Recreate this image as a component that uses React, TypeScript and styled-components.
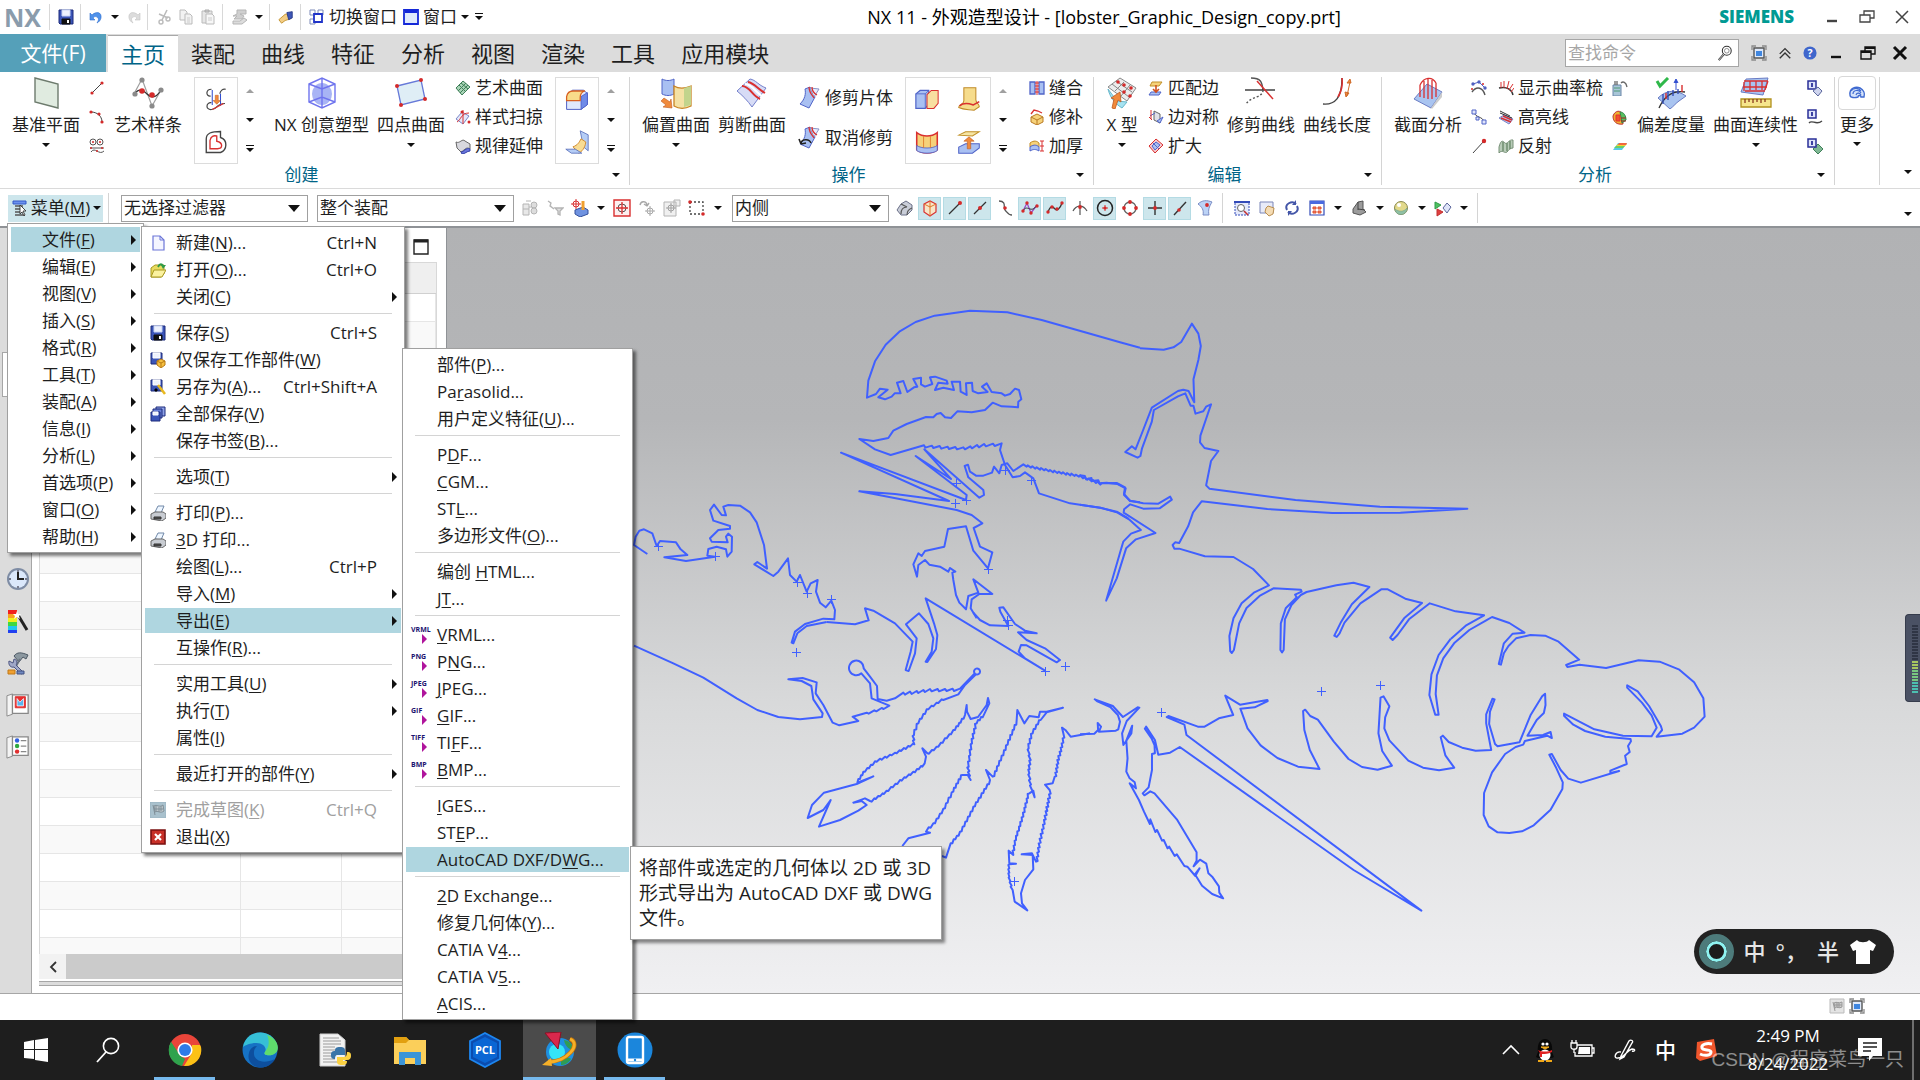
import React from "react";
import styled, { createGlobalStyle, css } from "styled-components";

const Global = createGlobalStyle`
  * { box-sizing: border-box; }
  html, body { margin: 0; padding: 0; }
  body { overflow: hidden; }
  button, input, select {
    font: inherit; color: inherit; border: 0; padding: 0; margin: 0; background: none; border-radius: 0;
  }
  svg { display: block; flex: none; }
`;

/* ---------- icons ---------- */

const P = (d: string, stroke = "#333", fill = "none", w = 1) => (
  <path key={d + stroke} d={d} stroke={stroke} fill={fill} strokeWidth={w} />
);
const D = (pts: number[][], r = 1.6, c = "#d42a2a") =>
  pts.map(([x, y]) => <circle key={`${x}-${y}`} cx={x} cy={y} r={r} fill={c} />);

const B = "#5064c8";
const LB = "#a9c0f2";
const Y = "#f6d27a";
const R = "#d93030";

const ICONS: Record<string, [number, React.ReactNode]> = {
  save: [16, <>{P("M1 1h14v14H2l-1-1z", "#1c2b7a", "#3b55b8")}{P("M4 1h8v6H4z", "#c8d4f4", "#eef2fd")}{P("M4 10h8v5H4z", "#111", "#111")}{P("M9 11h2v3H9z", "#fff", "#fff", 0)}</>],
  undo: [16, <>{P("M3 6c4-4 10-3 9 3-.3 2-2 4-4 5 2-3 2-5 0-6-2-1-3 0-4 1l2 2H1V4z", "#2f6fd0", "#4f92ea", 0.6)}</>],
  redo: [16, <>{P("M13 6C9 2 3 3 4 9c.3 2 2 4 4 5-2-3-2-5 0-6 2-1 3 0 4 1l-2 2h5V4z", "#c4c4c4", "#dcdcdc", 0.6)}</>],
  cut: [16, <>{P("M11 1 6 11M3 5l9 4", "#bbb", "none", 1.6)}<circle cx="5" cy="13" r="2" fill="none" stroke="#bbb" strokeWidth="1.4" /><circle cx="12" cy="10" r="2" fill="none" stroke="#bbb" strokeWidth="1.4" /></>],
  copy: [16, <>{P("M2 1h5l2 2v8H2z", "#bbb", "#f2f2f2")}{P("M7 5h5l2 2v8H7z", "#bbb", "#f2f2f2")}{P("M9 9h3M9 11h3M9 13h3", "#ccc")}</>],
  paste: [16, <>{P("M2 2h10v12H2z", "#bbb", "#e6e6e6")}{P("M5 1h4v2H5z", "#aaa", "#ccc")}{P("M6 5h6l2 2v8H6z", "#bbb", "#f7f7f7")}{P("M8 9h4M8 11h4", "#ccc")}</>],
  gear: [18, <>{P("M6 2h9v4H9l4 2-2 3H3l3-3H2l4-2z", "#b5b5b5", "#cfcfcf")}{P("M2 13h7l4-3 3 2-5 4H2z", "#b5b5b5", "#dcdcdc")}</>],
  touch: [18, <>{P("M1 12 8 6l6-1v6l-6 2-4 3z", "#c2902c", "#f3cd84")}{P("M10 4l6-1v7l-4 2z", "#273a86", "#3f57b8")}</>],
  switchw: [16, <>{P("M1 1h5v5H1zM9 1h5v5H9zM1 10h5v5H1z", "#7d8bb8", "#fff")}{P("M5 5h8v8H5z", "#2034c8", "#fff", 1.8)}</>],
  window: [16, <>{P("M1 1h14v14H1z", "#1428d8", "#dfeafc", 1.8)}{P("M2 2h12v2H2z", "#1428d8", "#1428d8", 0)}</>],
  plane: [32, <>{P("M5 1 28 7v24L5 25z", "#6d7b6d", "#e0ebe0", 1.4)}</>],
  line: [16, <>{P("M3 13 13 3", "#444")}{D([[3, 13], [13, 3]])}</>],
  arc: [16, <>{P("M2 3c6 0 11 4 11 10", "#444")}{D([[2, 3], [10, 5], [13, 13]])}</>],
  curves: [16, <><circle cx="4" cy="4" r="3" fill="none" stroke="#555" /><circle cx="11" cy="4" r="3" fill="none" stroke="#555" />{P("M1 10h14M2 14c4-6 8 4 13-1", "#555")}{D([[2, 10], [8, 13], [13, 10], [4, 4], [11, 4]], 1)}</>],
  spline: [32, <>{P("M3 15 10 2l10 27 9-16", "#a0a0a0", "none", 1.2)}{P("M3 16c6-6 9-2 12 1s8 6 14-4", "#333", "none", 1.3)}{D([[3, 17], [10, 3], [20, 29], [29, 13]], 2.6, "#8a8a8a")}{D([[10, 14], [20, 18]], 2.8)}</>],
  project: [32, <>{P("M10 3C2 3 2 13 9 12M29 3c-6-1-7 3-8 6M10 21c-8-1-8 10 0 9M10 30c9 0 5-8 18-8", "#444", "none", 1.6)}{P("M11 4v20M22 9v16", "#334fd0", "none", 1.4)}{P("M15 11h4v7h3l-5 5-5-5h3z", "#c05a20", "#f08a3c", 0.7)}{P("M11 30 26 22", R, "none", 1.8)}</>],
  offsetc: [32, <>{P("M3 30V12C3 4 10 2 22 2v8c10 3 9 17 0 20z", "#444", "#fff", 1.8)}{P("M8 25V14c1-6 5-7 9-6v7c9 2 8 10 1 10z", R, "none", 1.8)}</>],
  nxrealize: [32, <><ellipse cx="16" cy="17" rx="10" ry="11" fill="#a8b4f5" />{P("M3 7 16 1l13 6v18l-13 6-13-6zM3 7l13 5 13-5M16 12v19M3 25l13-5 13 5M16 1v19", "#6f74ee", "none", 1.4)}</>],
  fourpt: [32, <>{P("M2 9 26 3l4 19-24 6z", "#6679d8", "#dfeef6", 1.3)}{D([[2, 9], [26, 3], [30, 22], [6, 28]], 2)}</>],
  studio: [16, <>{P("M1 8 8 1l7 6-8 8z", "#3f7f58", "#a8d3b6")}{P("M4 5l7 7M6 3l7 6M3 11l8-8M5 13l8-8", "#3f7f58")}</>],
  sweep: [16, <>{P("M1 10 7 3l7 4-6 8z", "#7a87c8", "#e4e8fa")}{P("M2 13c4-2 4-9 12-9M8 1v14", R)}{D([[7, 3], [14, 13]], 1.5)}</>],
  law: [16, <>{P("M1 4c4 2 6-4 9-1l5 3v5c-4-3-6 2-9 3L2 10z", "#666", "#d8d8de")}{P("M6 14c3 0 5-5 9-3v2c-3 0-5 3-8 3z", "#3340a8", "#6a76dc")}</>],
  blendface: [30, <>{P("M2 12 9 4h14l5 4v14l-8 6H2z", "#4a5cc4", "#dfe8fc", 1.2)}{P("M20 12l8-5v15l-8 6z", "#4a5cc4", "#6f8be8")}{P("M2 17v-5c1-5 4-7 8-7h15c-4 1-6 3-6 8v4z", "#d86020", "#f8dc8a", 1.6)}</>],
  flange: [30, <>{P("M19 1l10 5v20l-6-5z", "#5068b8", "#b5cdf6")}{P("M10 21c6-2 8-6 10-10l6 4c-1 8-5 12-9 14z", "#d08a30", "#f8dc94", 1.2)}{P("M1 24h12l8 5H8z", "#5068b8", "#b5cdf6")}</>],
  offsurf: [32, <>{P("M2 2c4 2 8 2 12 0v15c-4 2-8 2-12 0z", B, LB)}{P("M14 9c5 3 10 3 17 0v20c-6 3-12 3-17 0z", "#c98424", "#f4e1a4", 1.3)}{P("M24 11v19l7-2V9z", "#b4c070", "#c2d48c", 0)}{P("M4 21l6 4 1-3 1 9-9-1 3-2-5-4z", "#c05a20", "#f08a3c", 0.6)}</>],
  divide: [32, <>{P("M1 14 14 2c6 1 8 6 16 9L16 30C12 24 6 18 1 14z", "#7480cc", "#d7dcf6")}{P("M6 9c8 0 10 10 18 13M12 5c6 1 10 7 17 11", R, "none", 2)}{P("M9 7c7 0 10 8 17 12", "#fff", "none", 2)}</>],
  trim: [24, <>{P("M8 3l5-2 5 10-6 11-9-4C8 13 9 8 8 3z", B, LB)}{P("M13 2l9 1-5 8z", "#8a93c8", "#e9ecfb")}{P("M12 1c0 6 4 9 5 11M15 1c0 4 3 7 5 8", R, "none", 1.3)}</>],
  untrim: [24, <>{P("M8 3l5-2 5 10-6 11-9-4C8 13 9 8 8 3z", B, LB)}{P("M13 2l9 1-5 8z", "#8a93c8", "#e9ecfb")}{P("M12 1c0 6 4 9 5 11M15 1c0 4 3 7 5 8", R, "none", 1.3)}{P("M4 18c0-5 8-6 10-1M4 18l-2-5M4 18l5-1", "#222", "none", 1.6)}</>],
  cubeoff: [28, <>{P("M1 8l5-4h10v16l-4 5H1z", B, LB, 1.4)}{P("M1 8h11v17M12 8l4-4", B)}{P("M14 9l5-5h8v15l-5 6h-8z", R, "#f8dfa0", 1.2)}</>],
  pipe: [28, <>{P("M8 1h14v14c0 4 4 4 4 8l-6 4c-8-1-12 0-18-3 0-5 6-3 6-8z", "#c08a28", "#f6dc8c", 1.2)}{P("M3 22c6-5 13-2 16-1l7-4", R, "none", 1.8)}</>],
  extend: [28, <>{P("M2 3c4 3 6 4 12 4s8-1 12-4v20c-5 5-19 5-24 0z", R, Y, 1.8)}{P("M2 18c5 4 19 4 24 0v6c-5 4-19 4-24 0z", B, LB)}{P("M10 7v14M18 7v14", "#e07828")}</>],
  pull: [28, <>{P("M2 6 10 2h16l-8 5z", "#c09028", "#f6e5a4", 1.2)}{P("M2 20l8-4h16v5l-8 6H2z", B, LB, 1.2)}{P("M12 22V13H8l6-5 6 5h-4v9z", "#c05a20", "#f08a3c", 0.7)}</>],
  sew: [16, <>{P("M1 2h5v12H1zM10 2h5v12h-5z", B, LB, 1.3)}{P("M8 1v14M6 3h4M6 6h4M6 9h4M6 12h4", R)}</>],
  patch: [16, <>{P("M2 8l6-3 6 3v5l-6 3-6-3z", "#b87a24", Y)}{P("M2 8l6 3 6-3M8 11v5", "#b87a24")}{P("M2 5l3-4 4 1 4 2", R, "none", 1.3)}</>],
  thicken: [16, <>{P("M1 5c4-3 7-2 9 0v4c-3-2-6-2-9 0z", "#c08a24", Y)}{P("M1 9c4-3 7-2 9 0v4c-3-2-6-2-9 0z", B, LB)}{P("M13 3v10M11 3h4M11 13h4M11 8h4", R)}</>],
  xform: [32, <>{P("M2 10 14 1l16 10-9 13z", "#888", "#ececec")}{P("M6 7l17 13M10 4l16 11M9 14l9-9M15 19l9-11", "#888")}{P("M2 12l9 12 10 1-5 6C8 26 4 20 2 12z", "#68b8cc", "#a6e2f0")}{P("M6 31l2-9-3-1 9-6 1 10-3-2-3 9z", "#c05a20", "#f08a3c", 0.8)}{D([[12, 5], [18, 8], [25, 11], [18, 15], [24, 19]], 1.8)}</>],
  matchedge: [16, <>{P("M4 2h10l-3 4H2z", "#c09028", Y)}{P("M3 12h10l-2 3H1z", B, LB)}{P("M8 5v7M5 9l3 3 3-3", "#d05020", "none", 1.6)}</>],
  symm: [16, <>{P("M6 2l6 3v9l-6-3z", "#666", "#e0e0e8")}{P("M2 7l5-3M9 12l6-4-3 6z", B, LB)}{P("M3 1v9M1 8l3 3", R)}</>],
  enlarge: [16, <>{P("M1 8 8 1l7 6-8 8z", R, "#f4c9d0")}{P("M4 8l4-4 4 3-5 5z", B, LB)}{P("M5 5l6 6", B)}</>],
  trimcurve: [32, <>{P("M6 1c10 0 11 4 12 12", "#555", "none", 1.4)}{P("M0 13h30", "#333", "none", 1.4)}<path d="M18 13c0 8-12 6-17 14" fill="none" stroke="#555" strokeWidth="1.4" strokeDasharray="2 2" />{P("M12 4l16 18", R, "none", 1.5)}</>],
  curvelen: [32, <>{P("M2 27c12 1 19-6 19-26", "#444", "none", 1.4)}{P("M21 1c1 8-1 14-4 19", R, "none", 1.6)}{P("M29 5l-3 14M29 2l-3 4h4zM25 20l-1-5 4 1z", "#d06a28", "#f08a3c", 1)}</>],
  section: [32, <>{P("M2 22 15 7l15 8-11 16z", "#6a7cc4", "#a9c4f0")}{P("M19 31l11-16v5L20 32z", "#999", "#ccc", 0)}{P("M8 20V8M12 21V4M16 22V2M20 22V3M24 20V6M8 8c4-8 12-9 16-2", R, "none", 1.3)}</>],
  ana1: [16, <>{P("M1 12c5-7 11-4 13 3", "#555", "none", 1.4)}{P("M2 4l6-2 6 6", B)}{D([[2, 4], [8, 2], [14, 8]], 1.7, "#5060c0")}{D([[1, 9], [12, 4]], 1)}</>],
  ana2: [16, <>{P("M3 3c1 6 9 4 10 10", "#444")}{P("M1 1h4v4H1zM11 11h4v4h-4zM5 8h3v3H5z", B, "#dfe4fa")}</>],
  ana3: [16, <>{P("M2 15 13 3", "#444")}{D([[13, 3]], 2.2)}</>],
  comb: [16, <>{P("M1 8c8-2 13 2 14 7", "#333", "none", 1.4)}{P("M3 8V2M6 8V1M9 9l2-8M11 10l4-6M13 12l3-4", R)}</>],
  highlight: [16, <>{P("M1 9l5-3 9 4-4 5z", "#7a87c8", "#b8c6f2")}{P("M2 2l10 5M2 4l12 5", "#333")}{P("M3 9l10 4M5 7l9 4", R, "none", 1.4)}</>],
  reflect: [16, <>{P("M1 9c2-8 4-6 6-4s4-4 8-3v8c-3 0-4 2-6 4s-5-3-8 1z", "#779077", "#b9ccb9")}{P("M5 4v9M9 5v8M12 3v8", "#6c8a6c", "none", 1.4)}</>],
  cup: [16, <>{P("M1 5h8v11H1z", "#6a86a8", "#a9c6d8")}{P("M3 5V1M5 5V1M9 3c2-2 5-1 6 4", "#666", "none", 1.3)}{P("M2 8h6M2 11h6", "#4f9a74")}</>],
  heat: [16, <>{P("M1 7c2-6 8-6 9-2l1 10C5 16 1 13 1 7z", "#c03030", "#f0b030")}{P("M8 3c4 0 6 4 6 8l-4 3z", "#308850", "#58c060")}{P("M4 6h4v6H4z", "#e03030", "#f05030")}{P("M9 9h5M9 12h5", "#a02020")}</>],
  rainbow: [16, <>{P("M1 12 6 5h9l-5 7z", "none", "#58c8e8", 0)}{P("M2 10h9l2-2H4z", "none", "#68d068", 0)}{P("M4 8h9l2-2H6z", "none", "#f8d030", 0)}{P("M7 5h8l-1 2H6z", "none", "#f06840", 0)}</>],
  deviate: [32, <>{P("M3 21c8-8 18-9 28-2l-7 5c-3 2-5 5-9 8z", "#6a7cc4", "#a9c4f0")}{P("M4 31C9 20 17 13 30 15", "#333", "none", 1.3)}{P("M8 17v10M13 14v9M18 13v6M23 12v5", "#334fb8", "none", 1.4)}{P("M27 8v7M11 22v-6", R, "none", 1.4)}{P("M21 13V3M19 6l2-4 2 4", "#334fd0", "#334fd0", 1)}{P("M2 4l3 5L13 1l-1 1", "#2fb84a", "none", 3)}</>],
  continuity: [32, <>{P("M6 2 28 1l-5 17L1 15z", "#6a7cc4", "#a9c4f0")}{P("M4 4h24M3 10h24M4 5v9M10 4v9M16 4v9M22 4v9M28 4l-3 9M5 14h20", R, "none", 1.3)}{P("M1 22h30v8H1z", "#b0901c", "#f6e58c", 1.3)}{P("M5 22v4M9 22v3M13 22v4M17 22v3M21 22v4M25 22v3", "#8a3a20", "none", 1.3)}</>],
  info1: [16, <>{P("M1 1h8v8H1z", "#2a2f98", "#dfe4fa", 1.5)}{P("M5 3v4", "#2a2f98", "none", 1.8)}{P("M6 11l5-4 4 4-4 5z", "#5c679c", "#cfd5ee")}</>],
  info2: [16, <>{P("M1 1h8v8H1z", "#2a2f98", "#dfe4fa", 1.5)}{P("M5 3v4", "#2a2f98", "none", 1.8)}{P("M2 14c3-4 7 3 13-2", "#444", "none", 1.3)}</>],
  info3: [16, <>{P("M6 11l5-5 5 5-5 5z", "#3f7f58", "#7fb894")}{P("M1 1h8v8H1z", "#2a2f98", "#dfe4fa", 1.5)}{P("M5 3v4", "#2a2f98", "none", 1.8)}</>],
  brain: [18, <>{P("M2 11C1 4 8 2 12 4s5 6 4 9h-3c0-2-3-2-3 0-3 1-8 1-8-2z", "#3f6ad0", "#d4e2fa", 1.4)}{P("M5 10c0-4 6-5 8-1M8 11c1-3 4-2 5 0M3 7c3-4 8-3 10 0", "#3f6ad0", "none", 1.2)}</>],
  menu: [16, <>{P("M1 1h13v3H1z", "#3358c8", "#6c92ee")}{P("M3 6h8M3 9h6M3 12h7M3 15h9", "#555", "none", 1.3)}{P("M8 5v9l2-2 2 4 1-1-2-4h3z", "#333", "#fff", 0.9)}</>],
  t_asm: [18, <>{P("M2 5h6v11H2zM5 2h5M2 10h6M8 8h3", "#b4b4b4", "#e8e8e8")}<circle cx="13" cy="6" r="3" fill="#ddd" stroke="#b4b4b4" /><circle cx="13" cy="12" r="3" fill="#ddd" stroke="#b4b4b4" /></>],
  t_filter: [18, <>{P("M2 2l3 2-1 3 4 3M9 9h8l-3 3v4l-2-1v-3z", "#b4b4b4", "#e0e0e0", 1.3)}</>],
  t_snap: [18, <>{P("M4 11l8-3 5 3v4l-8 3-5-3z", "#34509c", "#6f92e0")}<circle cx="5" cy="5" r="3" fill="none" stroke={R} />{P("M5 0v10M0 5h10", R)}{P("M12 2v9", "#f0a030", "none", 3)}</>],
  t_target: [18, <>{P("M1 1h16v16H1z", R, "#fdf0f0", 1.4)}<circle cx="9" cy="9" r="4" fill="none" stroke="#555" />{P("M9 3v12M3 9h12", R, "none", 1.3)}</>],
  t_rot: [18, <>{P("M2 6c1-5 7-4 7 1M9 7l-3-2M9 7l2-3", "#a8a8a8", "none", 1.4)}<circle cx="12" cy="12" r="3" fill="none" stroke="#a8a8a8" />{P("M12 7v10M7 12h10", "#a8a8a8")}</>],
  t_tgray: [18, <>{P("M1 3h12v14H1zM11 1h6v6h-6z", "#b4b4b4", "#f0f0f0")}<circle cx="8" cy="9" r="3" fill="none" stroke="#a0a0a0" />{P("M8 4v10M3 9h10", "#a0a0a0")}</>],
  t_rect: [18, <><rect x="2" y="3" width="13" height="12" fill="none" stroke="#444" strokeWidth="1.3" strokeDasharray="2 2" />{D([[2, 3], [15, 15]], 1.8)}</>],
  t_face: [18, <>{P("M1 11 5 5l5-3 6 4v5l-5 5H5z", "#6b7088", "#c9cdd8")}{P("M5 15c0-5 2-7 6-7M11 16c0-4 2-6 5-7M5 5l6 3", "#555", "none", 1.2)}</>],
  t_cube: [18, <>{P("M3 5l6-3 6 3v8l-6 4-6-4z", R, "#f8e6c8", 1.2)}{P("M3 5l6 3 6-3M9 8v9M9 2v6", "#e07828")}</>],
  t_line1: [18, <>{P("M3 15 14 4", "#333", "none", 1.3)}{D([[14, 4]], 2)}</>],
  t_line2: [18, <>{P("M3 15 15 3", "#333", "none", 1.3)}{D([[9, 9]], 2)}</>],
  t_scurve: [18, <>{P("M3 2c8 0 4 7 6 9s3 5 7 5", "#555", "none", 1.3)}{D([[9, 9]], 1.8)}</>],
  t_zig: [18, <>{P("M2 12 6 4l4 10 6-8", "#9a4cc8", "none", 1.3)}{P("M2 12c4-8 8 4 14-6", "#333")}{D([[2, 12], [6, 4], [10, 14], [16, 7]], 1.7)}</>],
  t_wave: [18, <>{P("M2 13c3-8 5-5 7-3s5 0 7-6", "#333", "none", 1.3)}{D([[2, 13], [6, 8], [11, 10], [16, 4]], 1.7)}</>],
  t_cross: [18, <>{P("M9 2v14M2 12c3-6 10-7 14 0", "#555", "none", 1.2)}{D([[9, 8]], 1.9)}</>],
  t_circle: [18, <><circle cx="9" cy="9" r="7.500" fill="none" stroke="#222" strokeWidth="1.5" />{P("M9 6v6M6 9h6", R)}{D([[9, 9]], 1.6)}</>],
  t_quad: [18, <><circle cx="9" cy="9" r="6" fill="none" stroke="#666" strokeWidth="1.3" />{D([[9, 3], [15, 9], [9, 15], [3, 9]], 1.9)}</>],
  t_plus: [18, <>{P("M9 2v14M2 9h14", "#333", "none", 1.4)}{D([[9, 9]], 1.9)}</>],
  t_slash: [18, <>{P("M3 16 15 3", "#333", "none", 1.4)}{D([[8, 11]], 1.8)}</>],
  t_sheet: [18, <>{P("M2 5c4-4 9-4 14-2-3 5-4 8-3 13H7C8 11 6 8 2 5z", "#7a8cc4", "#bcd3f6")}{D([[11, 6]], 1.9)}</>],
  v_zoom: [18, <><rect x="2" y="3" width="14" height="13" fill="#e4e9fb" stroke="#334bb8" strokeDasharray="2 1" />{P("M1 2h16v2H1z", "#334bb8", "#334bb8", 0)}<circle cx="8" cy="9" r="3.5" fill="#fff" stroke="#666" />{P("M11 12l4 4", "#c03030", "none", 1.6)}</>],
  v_pan: [18, <>{P("M2 3h13v11H2z", "#7a86b8", "#e8ebf8")}{P("M8 9l2-2 6 2-1 6-4 2-4-4z", "#b88d50", "#f5dcb4")}</>],
  v_rot: [18, <>{P("M4 11C1 5 9 1 13 5M14 7c3 6-5 10-9 6", "#4456a8", "none", 2)}{P("M13 1v5H9zM5 17v-5h4z", "#4456a8", "#4456a8", 0)}</>],
  v_fit: [18, <>{P("M2 2h14v14H2z", "#334bb8", "#fff", 1.2)}{P("M2 2h14v3H2z", "#4a6ae0", "#4a6ae0", 0)}{P("M5 8h3v2H5zM10 8h3v2h-3zM5 12h3v2H5zM10 12h3v2h-3z", "#e05030", "#f08060")}</>],
  v_orient: [18, <>{P("M3 10 8 3l5-1v8l3 3-6 3-7-2z", "#555", "#9c9c9c")}{P("M8 10l7 1M8 3v8", "#444")}</>],
  v_ball: [18, <><circle cx="9" cy="9" r="6.5" fill="#e2d98a" stroke="#8a8a50" />{P("M3 10c4 3 9 3 12-1 0 8-11 9-12 1z", "#6a9a84", "#8fc0a4", 0.5)}<circle cx="7" cy="6" r="2" fill="#fff" /></>],
  v_sect: [18, <>{P("M1 3l6 3-6 4z", "#2f9a48", "#4fc060")}{P("M3 10l6 3-6 4z", "#c03030", "#e04040")}{P("M9 9l4-5 4 4-4 6z", "#5c679c", "#dfe4f8")}</>],
  newf: [16, <>{P("M3 1h7l4 4v10H3z", "#6c76d8", "#f4f5ff", 1.2)}{P("M10 1v4h4", "#6c76d8")}</>],
  open: [16, <>{P("M1 6l4-3h9v9l-3 3H1z", "#a89820", "#e8dc60")}{P("M1 15l3-7h12l-4 7z", "#a89820", "#fbf2a0")}{P("M8 5c2-4 4-3 5-1", "#2f9a48", "none", 1.8)}{P("M11 3h5l-3 4z", "#2f9a48", "#2f9a48", 0)}</>],
  savework: [16, <>{P("M1 1h11v11H1z", "#1c2b7a", "#3b55b8")}{P("M3 1h7v5H3z", "#fff", "#eef2fd")}{P("M7 9l4-2 4 2v4l-4 3-4-3z", "#b87a14", "#f6c040")}{P("M7 9l4 2 4-2M11 11v4", "#b87a14")}</>],
  saveas: [16, <>{P("M1 1h11v11H1z", "#1c2b7a", "#3b55b8")}{P("M3 1h7v5H3z", "#fff", "#eef2fd")}{P("M8 6l7 9", "#e8b820", "none", 2.6)}{P("M5 10h2v2H5z", "#000", "#000")}</>],
  saveall: [16, <>{P("M6 1h9v9H6z", "#1c2b7a", "#8ea2e8")}{P("M3 3h9v9H3z", "#1c2b7a", "#6a80d8")}{P("M1 6h9v9H1z", "#1c2b7a", "#3b55b8")}{P("M3 6h5v3H3z", "#fff", "#eef2fd")}</>],
  print: [16, <>{P("M5 7 8 1h6l-3 7z", "#7088a8", "#eef6ff")}{P("M1 9l4-2h8l3 2v4l-4 3-11-2z", "#666", "#c8ccd2")}{P("M4 12h7v2H4z", "#333", "#555")}</>],
  flag: [16, <>{P("M0 0h16v16H0z", "#9ab4c2", "#a9c1cd")}{P("M3 3l2 10M4 4c3-2 5 2 9-1l1 6c-4 3-6-1-9 1z", "#7f8f98", "#c0c8cc")}{P("M6 4v5M9 5v5M11 4v5M5 7h8", "#7f8f98")}</>],
  exit: [16, <>{P("M1 1h14v14H1z", "#7a1010", "#c83028", 1.6)}{P("M5 5l6 6M11 5l-6 6", "#fff", "none", 2.2)}</>],
  finish: [16, <>{P("M1 1h14v14H1z", "#bbb", "#e4e4e4")}{P("M4 4l2 9M5 5c3-2 4 1 8-1v5c-3 2-5-1-7 1z", "#999", "#ccc")}{P("M8 4v5M10 5v4M6 7h7", "#999")}</>],
  full: [16, <>{P("M1 5V1h4M11 1h4v4M15 11v4h-4M5 15H1v-4", "#8a8a8a", "none", 1.3)}{P("M3 3h10v10H3z", "#555", "#dfe9fa", 1.4)}{P("M5 6h6v5H5z", "#2a66c8", "#3f86e0", 0)}</>],
  clock: [24, <><circle cx="12" cy="12" r="11" fill="#7e8ca4" /><circle cx="12" cy="12" r="9" fill="#dbe8fb" />{P("M12 5v7h6", "#222", "none", 2)}{P("M12 3v2M12 19v2M3 12h2M19 12h2", "#556", "none", 1.4)}</>],
  wand: [24, <>{["#f02020", "#f8a020", "#f0f020", "#40d840", "#20c8f0", "#2040f0"].map((c, i) => <rect key={c} x="2" y={1 + i * 4} width="9" height="4" fill={c} />)}{P("M12 6l9 15", "#222", "none", 3)}{P("M11 2l1 3 3 0-2 2 1 3-3-2-3 2 1-3-2-2h3z", "#fff", "#fff", 0)}</>],
  tools: [24, <>{P("M8 5c3-4 7-4 14-1l-2 4-3-2-4 5z", "#4c5864", "#8c98a0")}{P("M14 8 9 17", "#6c7480", "none", 2)}{P("M3 10l4 2 1-4c4 1 3 5 2 6l8 8-3 1-7-7c-3 1-6-2-5-6z", "#4c5480", "#a0a8c8")}{P("M2 19h7v4H2z", "#c07818", "#f0a030")}{P("M11 20h7v3h-7z", "#405080", "#7088c0")}</>],
  roles: [26, <>{P("M1 3l6-2v22l-6 2z", "#888", "#f4f4f4")}{P("M7 2h17v20H7z", "#888", "#fff", 1.4)}{P("M10 4h11v12H10z", R, "#e83030")}{P("M12 14V6l3 4 4-4v8z", "#fff", "#58b4f0", 0.8)}</>],
  hist: [26, <>{P("M1 3l6-2v22l-6 2z", "#888", "#f4f4f4")}{P("M7 2h17v20H7z", "#888", "#fff", 1.4)}{D([[12, 6]], 2.4, "#3060e0")}{D([[12, 12]], 2.4, "#30a840")}{D([[12, 18]], 2.4, "#e03030")}{P("M16 6h6M16 12h6M16 18h6", "#888", "none", 1.4)}</>],
  search: [18, <><circle cx="11" cy="6.5" r="5" fill="none" stroke="#333" strokeWidth="1.2" /><circle cx="11" cy="6.5" r="2.6" fill="none" stroke="#666" strokeWidth=".8" />{P("M8 10l-6 7", "#333", "none", 2.4)}{P("M8 10l-6 7", "#fff", "none", 0.8)}</>],
  up2: [16, <>{P("M2 9l6-6 6 6M2 14l6-6 6 6", "#333", "none", 1.6)}</>],
  help: [16, <><circle cx="8" cy="8" r="7.5" fill="#3f66cc" /><text x="8" y="12" textAnchor="middle" fontSize="12" fontWeight="700" fill="#fff" fontFamily="Open Sans, sans-serif">?</text></>],
  min: [16, <>{P("M3 12h10", "currentColor", "none", 2.4)}</>],
  restore: [16, <>{P("M5 6V2h10v7h-4M1 6h10v8H1z", "currentColor", "none", 1.4)}{P("M1 7h10M5 3h10", "currentColor", "none", 2)}</>],
  close: [16, <>{P("M2 2l12 12M14 2 2 14", "currentColor", "none", 1.5)}</>],
  closeb: [16, <>{P("M2 2l12 12M14 2 2 14", "currentColor", "none", 3)}</>],
  restoret: [16, <>{P("M5 6V2h10v7h-4M1 6h10v7H1z", "currentColor", "none", 1.3)}</>],
  max: [16, <>{P("M1 1h14v14H1z", "#222", "#fff", 1.4)}{P("M1 2h14", "#222", "none", 3)}</>],
  win: [24, <>{P("M0 4l10-2v9H0zM11 2l13-2v11H11zM0 12h10v9L0 20zM11 12h13v12l-13-2z", "none", "#fff", 0)}</>],
  find: [26, <><circle cx="16" cy="9" r="7.6" fill="none" stroke="#fff" strokeWidth="1.6" />{P("M11 15 2 25", "#fff", "none", 1.8)}</>],
  chrome: [34, <><circle cx="17" cy="17" r="16" fill="#e9453a" />{P("M3 9 14 25 12 32A16 16 0 0 1 3 9z", "none", "#2fa24c", 0)}{P("M33 14a16 16 0 0 1-17 19l8-13 0-8h8z", "none", "#fbc116", 0)}{P("M3 9l8 13 6 4-3 7A16 16 0 0 1 3 9z", "none", "#2fa24c", 0)}<circle cx="17" cy="17" r="7.6" fill="#fff" /><circle cx="17" cy="17" r="6" fill="#2f7be8" /></>],
  edge: [36, <><circle cx="18" cy="18" r="17.5" fill="#1672c4" />{P("M1 15C3 4 12 0 19 .5 29 1 36 9 35.500 16c-.5 6-6 8-11 7-3-1-2-2-1-4 1-4-3-8-9-8-6 0-11 2-13.500 4z", "none", "#36bfd6", 0)}{P("M25 3c8 3 12 9 10.500 15-1 4-6 6-11 5-3-1-2-2-1-4 4-4 4-11 1.500-16z", "none", "#5fdc6c", 0)}{P("M12 20c-1 8 8 13 21 7-4 7-10 9-16 8.500C9 34 5 28 7 21c1-4 4-7 8-7-2 2-3 4-3 6z", "none", "#0d4f9e", 0)}</>],
  py: [34, <>{P("M2 1h18l7 6v26H2z", "#ccc", "#f2f2f2")}{P("M5 5h16M5 8h18M5 11h18M5 14h12M5 17h12M5 20h12M5 23h12M5 26h12M5 29h18", "#9a9a9a", "none", 1)}{P("M17 18c0-3 1-4 5-4s5 1 5 4v4h-8c-1 0-2 1-2 4-3 0-4-1-4-4s1-4 4-4z", "none", "#3a75a8", 0)}{P("M29 19c4 0 4 2 4 4s-1 4-4 4h-4v1h4c0 3-1 4-5 4s-5-1-5-4v-4h7c2 0 3-2 3-5z", "none", "#fbd243", 0)}</>],
  folder: [34, <>{P("M1 4h12l3 3h17v24H1z", "none", "#fbcf5a", 0)}{P("M1 4h12l3 3-3 3H1z", "none", "#e2a010", 0)}{P("M6 32V19h22v13h-6v-7H12v7z", "none", "#3c95d8", 0)}</>],
  pcl: [36, <>{P("M18 1l15 8v18l-15 8-15-8V9z", "#1d86f0", "#0b4cae", 1.8)}{P("M18 5l12 6v14l-12 6-12-6V11z", "none", "#0a66d4", 0)}<text x="18" y="22" textAnchor="middle" fontSize="11" fontWeight="700" fill="#fff" fontFamily="Open Sans, sans-serif">PCL</text></>],
  nx: [36, <><circle cx="18" cy="20" r="14" fill="#1f8fe0" /><circle cx="15" cy="20" r="8" fill="#35e4f6" />{P("M22 8c6 1 9 5 10 10-5 0-9-4-10-10zM19 27c3-2 8-2 10 0-3 5-7 6-10 6z", "none", "#2f9c54", 0)}{P("M3 1 19 0l-3 17z", "#8c1024", "#d8284c", 1)}{P("M28 7c12 5-3 23-22 23", "#c87808", "none", 4.4)}{P("M28 7c12 5-3 23-22 23", "#f6b028", "none", 2.8)}{P("M0 33l9-7 1 8z", "none", "#f6b028", 0)}</>],
  phone: [36, <><circle cx="18" cy="18" r="17.5" fill="#1b86dc" /><rect x="10" y="5" width="16" height="26" rx="2" fill="none" stroke="#fff" strokeWidth="2.4" />{P("M10 28h16", "#fff", "none", 3)}<circle cx="18" cy="28" r="1.200" fill="#1b86dc" /></>],
  chev: [20, <>{P("M2 14l8-8 8 8", "#fff", "none", 1.6)}</>],
  qq: [24, <>{P("M5 14C4 6 7 1 12 1s8 5 7 13l2 5-2 1-14 0-2-1z", "none", "#080808", 0)}<ellipse cx="12" cy="17" rx="5.500" ry="5.500" fill="#fff" /><circle cx="10" cy="6" r="1.600" fill="#fff" /><circle cx="14" cy="6" r="1.600" fill="#fff" />{P("M8 9h8l-4 2z", "#f0a818", "#f0a818")}{P("M5 12c4 2 10 2 14 0v2c-4 2-7 2-10 2v3H7v-4z", "none", "#e02020", 0)}{P("M5 23h6M13 23h6", "#f0a818", "none", 2)}</>],
  batt: [26, <>{P("M8 8h15v11H6v-4M23 11h2v5h-2", "#fff", "none", 1.3)}{P("M10 10h11v7H9z", "none", "#fff", 0)}{P("M2 6h6v4c0 3-6 3-6 0zM3 3v3M7 3v3M5 12v4", "#fff", "#1e1e1e", 1.3)}</>],
  pen: [24, <>{P("M8 18 16 3c2-2 5 0 3 2l-8 14-4 2zM8 14c-6-1-8 7-3 6 7-1 9-8 14-9 4 0 3 3 0 2", "#fff", "none", 1.4)}</>],
  sogou: [24, <>{P("M3 4 20 1l3 17-17 5-4-3z", "none", "#f0562c", 0)}{P("M18 6c-5-1-11 0-10 4 1 3 9 1 9 4 0 4-7 4-11 2", "#fff", "none", 3)}</>],
  note: [24, <>{P("M0 0h24v18h-9l-4 5v-5H0z", "none", "#fff", 0)}{P("M5 5h14M5 9h14M5 13h8", "#1e1e1e", "none", 1.3)}</>],
  shirt: [28, <>{P("M8 2c2 3 10 3 12 0l7 5-3 6-3-1v14H7V12l-3 1-3-6z", "none", "#fff", 0)}</>],
};

const Icon = ({ n, s }: { n: string; s?: number }) => {
  const [box, body] = ICONS[n];
  return (
    <svg width={s ?? box} height={s ?? box} viewBox={`0 0 ${box} ${box}`} aria-hidden="true">
      {body}
    </svg>
  );
};

const Caret = ({ up, bar, right, c = "#111", big }: { up?: boolean; bar?: boolean; right?: boolean; c?: string; big?: boolean }) => {
  if (right) return <svg width="6" height="10" viewBox="0 0 6 10" aria-hidden="true"><path d="M0 0l5 5-5 5z" fill={c} /></svg>;
  if (big) return <svg width="12" height="7" viewBox="0 0 12 7" aria-hidden="true"><path d="M0 0h12L6 7z" fill={c} /></svg>;
  return (
    <svg width="8" height="8" viewBox="0 0 8 8" aria-hidden="true">
      {bar && <path d="M0 0h8v1H0z" fill={c} />}
      <path d={up ? "M0 6l4-4 4 4z" : bar ? "M0 3h8L4 7z" : "M0 2h8L4 6z"} fill={c} />
    </svg>
  );
};

/* "文件(&F)" draws F underlined as the access key */
const Key = ({ t }: { t: string }) => {
  const i = t.indexOf("&");
  if (i < 0) return <>{t}</>;
  return <>{t.slice(0, i)}<u>{t[i + 1]}</u>{t.slice(i + 2)}</>;
};

/* ---------- shell ---------- */

const Shell = styled.div`
  position: relative;
  display: flex;
  flex-direction: column;
  height: 100vh;
  overflow: hidden;
  background: #fff;
  color: #1e1e1e;
  font: 17px/20px "Open Sans", "Noto Sans CJK SC", sans-serif;
  u { text-underline-offset: 2px; text-decoration-thickness: 1px; }
`;

const TitleBar = styled.header`
  display: flex;
  align-items: center;
  height: 34px;
  flex: none;
`;
const Quick = styled.div`
  display: flex;
  align-items: center;
  height: 26px;
  flex: none;
`;
const NxMark = styled.div`
  width: 49px;
  padding-left: 4px;
  font: 700 25px/30px "Open Sans", sans-serif;
  color: #8a9cac;
`;
const QuickSet = styled.div`
  display: flex;
  align-items: center;
  gap: 6px;
  height: 26px;
  padding: 0 6px 0 8px;
  border-left: 1px solid #d8d8d8;
`;
const PlainButton = styled.button`
  display: flex;
  align-items: center;
  gap: 4px;
  white-space: nowrap;
`;
const Title = styled.h1`
  flex: 1;
  margin: 0;
  font-size: 18px;
  font-weight: 400;
  line-height: 34px;
  text-align: center;
  white-space: nowrap;
  color: #000;
`;
const TitleRight = styled.div`
  display: flex;
  flex: none;
  align-items: center;
  gap: 19px;
  padding-right: 10px;
  color: #444;
`;
const Brand = styled.span`
  margin-right: 11px;
  font: 800 17px/34px "Open Sans", sans-serif;
  color: #009a93;
`;

const TabBar = styled.nav`
  display: flex;
  height: 38px;
  flex: none;
  background: #dcdcdc;
`;
const Tab = styled.button<{ $kind?: "file" | "active" }>`
  padding: 0 13px;
  font-size: 22px;
  line-height: 36px;
  ${(p) => p.$kind === "file" && css`width: 106px; margin-right: 2px; background: #55a0b9; color: #fff; font-size: 21px;`}
  ${(p) => p.$kind === "active" && css`background: #fff; color: #006487; border-top: 1px solid #a8a8a8; margin-top: 1px;`}
`;
const TabRight = styled.div`
  display: flex;
  align-items: center;
  gap: 11px;
  margin-left: auto;
  padding-right: 12px;
`;
const WinButtons = styled.div`
  display: flex;
  gap: 16px;
  color: #111;
`;
const SearchBox = styled.label`
  display: flex;
  align-items: center;
  width: 174px;
  height: 28px;
  padding: 0 5px 0 2px;
  margin-right: 1px;
  background: #fff;
  border: 1px solid #a6a6a6;
  input { flex: 1; min-width: 0; outline: 0; }
  input::placeholder { color: #a6a6a6; opacity: 1; }
`;

/* ---------- ribbon ---------- */

const RibbonBar = styled.section`
  display: flex;
  height: 117px;
  flex: none;
  padding: 5px 0 3px;
  border-bottom: 1px solid #dadada;
`;
const GroupBox = styled.div`
  display: flex;
  flex-direction: column;
  border-right: 1px solid #d4d4d4;
`;
const GroupBody = styled.div`
  display: flex;
  height: 89px;
  padding: 0 6px 0 8px;
`;
const GroupFoot = styled.div`
  display: flex;
  align-items: center;
  height: 20px;
  color: #006487;
  span { flex: 1; text-align: center; }
  button { width: 26px; display: grid; justify-content: center; }
`;
const RibbonEnd = styled.div`
  display: flex;
  align-items: flex-end;
  margin-left: auto;
  padding: 0 8px 9px 0;
`;
const BigButton = styled.button`
  display: flex;
  flex-direction: column;
  align-items: center;
  gap: 6px;
  padding: 0 4px;
  white-space: nowrap;
`;
const IconColumn = styled.div`
  display: flex;
  flex-direction: column;
  align-items: center;
  width: 26px;
  padding-top: 3px;
  gap: 13px;
`;
const ListColumn = styled.div<{ $two?: boolean }>`
  display: flex;
  flex-direction: column;
  padding: ${(p) => (p.$two ? "9px 4px 0 7px" : "1px 4px 0 6px")};
  gap: ${(p) => (p.$two ? "16px" : "9px")};
`;
const Gallery = styled.div<{ $cols?: number }>`
  display: grid;
  grid-template-columns: repeat(${(p) => p.$cols ?? 1}, 42px);
  place-items: center;
  margin-left: 8px;
  height: 87px;
  border: 1px solid #dcdcdc;
`;
const GalleryNav = styled.div`
  display: flex;
  flex-direction: column;
  align-items: center;
  gap: 21px;
  width: 24px;
  padding-top: 10px;
  margin-right: 8px;
  &:last-child { margin-right: 0; }
`;
const MoreTile = styled.span`
  display: grid;
  place-items: center;
  width: 38px;
  height: 34px;
  margin-top: -1px;
  border: 1px solid #d8d8d8;
  border-radius: 4px;
`;
const MoreButton = styled(BigButton)`
  padding: 0 3px;
  gap: 5px;
`;

const Big = ({ n, t, arrow }: { n: string; t: string; arrow?: boolean }) => (
  <BigButton><Icon n={n} />{t}{arrow && <Caret />}</BigButton>
);
const Icons = ({ n }: { n: string[] }) => (
  <IconColumn>{n.map((k) => <button key={k} aria-label={k}><Icon n={k} /></button>)}</IconColumn>
);
const List = ({ items, two }: { items: [string, string][]; two?: boolean }) => (
  <ListColumn $two={two}>
    {items.map(([n, t]) => <PlainButton key={n}><Icon n={n} />{t}</PlainButton>)}
  </ListColumn>
);
const GalleryBlock = ({ n, cols }: { n: string[]; cols?: number }) => (
  <>
    <Gallery $cols={cols}>{n.map((k) => <button key={k} aria-label={k}><Icon n={k} s={24} /></button>)}</Gallery>
    <GalleryNav>
      <button aria-label="上一行"><Caret up c="#a0a0a0" /></button>
      <button aria-label="下一行"><Caret /></button>
      <button aria-label="展开"><Caret bar /></button>
    </GalleryNav>
  </>
);
const Group = ({ t, children }: { t: string; children: React.ReactNode }) => (
  <GroupBox>
    <GroupBody>{children}</GroupBody>
    <GroupFoot><span>{t}</span><button aria-label={t}><Caret /></button></GroupFoot>
  </GroupBox>
);

/* ---------- selection toolbar ---------- */

const ToolBar = styled.section`
  display: flex;
  align-items: center;
  height: 39px;
  flex: none;
  padding: 1px 0 0 8px;
  border-bottom: 2px solid #8f9296;
`;
const MenuButton = styled.button`
  display: flex;
  align-items: center;
  justify-content: space-between;
  width: 95px;
  height: 27px;
  padding: 0 2px 0 4px;
  background: #cde6ec;
`;
const Divider = styled.i`
  width: 1px;
  height: 30px;
  margin: 0 6px 0 5px;
  background: #d4d4d4;
`;
const SelectWrap = styled.label<{ $w: number }>`
  display: grid;
  align-items: center;
  width: ${(p) => p.$w}px;
  height: 27px;
  margin: 0 3px 0 6px;
  border: 1px solid #a0a0a0;
  select { grid-area: 1 / 1; width: 100%; height: 25px; padding: 0 2px; appearance: none; outline: 0; }
  svg { grid-area: 1 / 1; justify-self: end; margin-right: 7px; pointer-events: none; }
`;
const Tool = styled.button<{ $on?: boolean }>`
  display: grid;
  place-items: center;
  width: 23px;
  height: 23px;
  margin: 0 1px;
  flex: none;
  ${(p) => p.$on && css`background: #cde6ec; outline: 1px solid #b4dbe4; outline-offset: -1px;`}
`;
const CaretButton = styled.button<{ $end?: boolean }>`
  display: grid;
  justify-content: center;
  width: 17px;
  ${(p) => p.$end && css`width: 24px; margin-left: auto; padding-top: 12px;`}
`;
const Tools = ({ n }: { n: string[] }) => (
  <>
    {n.map((k, i) => {
      if (k === "v") return <CaretButton key={`v${i}`} aria-label="更多"><Caret /></CaretButton>;
      const on = k.startsWith("+");
      const name = on ? k.slice(1) : k;
      return <Tool key={k} $on={on} aria-label={name}><Icon n={name} /></Tool>;
    })}
  </>
);
const Pick = ({ w, v, label }: { w: number; v: string; label: string }) => (
  <SelectWrap $w={w}>
    <select aria-label={label} defaultValue={v}><option>{v}</option></select>
    <Caret big />
  </SelectWrap>
);

/* ---------- work area ---------- */

const Work = styled.main`
  display: flex;
  flex: 1;
  min-height: 0;
  border-bottom: 1px solid #a6a6a6;
`;
const Rail = styled.aside`
  display: flex;
  flex-direction: column;
  align-items: flex-end;
  gap: 18px;
  width: 32px;
  flex: none;
  padding: 124px 1px 0 2px;
  background: #dcdcdc;
  border-right: 1px solid #a6a6a6;
`;
const RailTab = styled.button`
  width: 100%;
  height: 45px;
  margin-bottom: 152px;
  background: #fff;
  border: 1px solid #a6a6a6;
`;
const Panel = styled.section`
  display: flex;
  flex-direction: column;
  width: 415px;
  flex: none;
  padding: 0 9px 7px 7px;
  border-right: 1px solid #8f9296;
`;
const PanelHead = styled.div`
  display: flex;
  justify-content: flex-end;
  align-items: flex-start;
  height: 34px;
  padding: 11px 8px 0 0;
`;
const GridClip = styled.div`
  flex: 1;
  min-height: 0;
  overflow: hidden;
  border: 1px solid #d8d8d8;
  border-bottom: 0;
`;
const Grid = styled.table`
  width: 100%;
  table-layout: fixed;
  border-collapse: collapse;
  th { height: 30px; background: #efefef; border-bottom: 1px solid #d0d0d0; }
  td { height: 28px; padding: 0; border-right: 1px solid #e6e6e6; border-bottom: 1px solid #e6e6e6; }
  tr:nth-child(even) td { background: #f9f9f9; }
  col:nth-child(1) { width: 200px; }
  col:nth-child(2) { width: 101px; }
`;
const HScroll = styled.div`
  display: flex;
  height: 25px;
  background: #cbcbcb;
  button { display: grid; place-items: center; width: 27px; background: #f2f2f2; }
`;
const Splitter = styled.div`
  height: 5px;
  margin-top: 2px;
  background: #dcdcdc;
  border: 1px solid #a6a6a6;
  border-width: 1px 0;
`;
const Viewport = styled.section`
  position: relative;
  flex: 1;
  min-width: 0;
  background: linear-gradient(#b1b2b4 0%, #b5b6b8 25%, #d8d9da 62%, #f0f0f2 100%);
`;
const Drawing = styled.svg`
  width: 100%;
  height: 100%;
  path { fill: none; stroke: #4060ff; stroke-width: 2; stroke-linejoin: round; vector-effect: non-scaling-stroke; }
  .mark { stroke-width: 1; }
`;

/* serrated edge: every segment of the line is split into small teeth */
const hairy = (pts: number[][], step = 16, amp = 4) => {
  const out: string[] = [];
  for (let i = 0; i < pts.length - 1; i++) {
    const [x0, y0] = pts[i];
    const [x1, y1] = pts[i + 1];
    const len = Math.hypot(x1 - x0, y1 - y0);
    const n = Math.max(1, Math.round(len / step));
    const nx = -(y1 - y0) / len;
    const ny = (x1 - x0) / len;
    for (let k = 0; k < n; k++) {
      const a = k / n;
      const b = (k + 0.2) / n;
      out.push(`${(x0 + (x1 - x0) * a).toFixed(0)} ${(y0 + (y1 - y0) * a).toFixed(0)}`);
      out.push(`${(x0 + (x1 - x0) * b + nx * amp).toFixed(0)} ${(y0 + (y1 - y0) * b + ny * amp).toFixed(0)}`);
    }
  }
  const l = pts[pts.length - 1];
  out.push(`${l[0]} ${l[1]}`);
  return "L" + out.join("L");
};

const UPPER = [
  "M1560 173L1500 157 1400 128 1265 90 1162 67 1050 62 944 77 887 96 838 125 797 164 765 214 745 272 741 323 768 312 780 296 803 299 775 322 795 328 815 320 824 310 842 310 831 278 850 273 862 306 882 292 892 290 880 267 903 263 903 283 915 290 937 282 930 262 945 260 980 272 983 281 955 278 945 300 970 293 1002 300 995 275 1020 275 1022 305 1040 315 1038 280 1056 278 1058 303 1075 310 1103 306 1086 290 1100 280 1115 306 1145 310 1155 317 1170 312 1185 296 1197 300 1204 328 1195 335 1194 352 1175 350 1145 349 1118 338 1095 360 1055 367 1012 364 993 384 975 382 962 369 950 372 940 382 918 381 860 402 820 422 805 444 760 453 718 447 765 478 812 495 912 466" +
    hairy([[912, 466], [1030, 472], [1092, 462], [1145, 460]], 24, 7) + "L1140 480 1155 525 1178 562 1200 558 1215 547 1240 565 1257 610 1350 640 1440 653 1490 665 1525 685",
  "M1560 637L1530 633 1512 612 1515 592 1490 579 1445 580" + hairy([[1445, 580], [1380, 556], [1290, 540], [1210, 523]], 14, -5) +
    "L1180 543 1162 520 1145 525 1138 550 1122 530 1116 548 1090 557 1068 557 1050 545 1044 524 1034 528 1045 562 1090 600 1092 615 1078 623 913 478 993 567 887 498 1040 615 1038 630 663 488 987 633 825 612 718 604 1010 660 1055 675 1087 700 1061 714 1080 770 1117 787 1104 835 1060 782 1038 709 984 717 973 770 915 783 905 798 895 790 880 823 891 860 895 825 915 810 928 824 960 830 985 845 990 834 1006 845 997 848 1000 870 1008 915 1018 938 1038 958 1045 918 1075 908 1060 868 1117 912 1078 912 1055 928 1052 955 1070 985",
  "M82 792L42 765 47 740 58 722 72 718 97 730 110 768 120 753 168 757 182 778 202 795 133 802 198 813 285 800 262 797 265 777 290 770 318 778 322 800 335 785 336 740 325 731 318 740 323 757 275 755 270 745 295 720 330 716 330 708 280 692 270 660 282 644 305 675 318 676 310 650 325 645 360 647 390 667 410 697 432 765 441 836 412 816 403 823 460 858 475 845 504 805 510 855 530 875 540 855 560 905 572 880 593 870 588 905 600 938 617 952 634 932 645 960 643 988 610 986 555 1002 525 1025 515 1058 520 1060 532 1030 560 1008 620 996",
];
const LOWER = [
  "M620 126L705 133 746 121 735 85 760 92 825 130 878 185 872 215 857 270 866 273 885 220 890 175 858 133 897 100 925 132 940 175 935 215 917 245 922 246 948 207 952 165 942 130 917 55 1275 272 1215 235 1196 215 1203 195 1220 196 1310 247 1320 240 1275 205 1220 180 1194 157 1250 160 1215 152 1185 132 1150 82 1138 83 1141 95 1165 138 1110 136 1080 120 1060 98",
  "M42 197L160 250 250 293 350 355 412 390 475 411 540 418 606 411 608 400 580 358 574 318 545 303 505 298 548 294 590 307 587 340 610 375 638 428 658 436 715 423 698 410 740 398" + hairy([[740, 398], [808, 377]], 22, 5) +
    "L755 355 750 310 724 280A22 22 0 1 1 731 265L750 290 771 318 773 357 800 362 825 355 850 338" + hairy([[850, 338], [930, 327], [1020, 326]], 22, 7) +
    "L1064 280A9 9 0 1 1 1068 283L1035 315 1015 343 970 360" + hairy([[970, 360], [925, 388], [895, 430], [882, 465], [883, 493]]) + hairy([[883, 493], [830, 520], [770, 545], [735, 575], [712, 608]]) +
    "L760 589 710 612 612 638 576 675 563 714 610 690 632 660 597 740 660 720 715 692 740 675 725 663 700 668 735 655 750 663" +
    hairy([[750, 663], [800, 632], [840, 600], [880, 575], [914, 550]]) + "L918 530 907 505 922 520" + hairy([[922, 520], [950, 500], [1000, 450], [1035, 405]]) +
    "L1040 375 1041 395 1052 417 1074 411 1100 375 1104 354 1108 370 1088 412" + hairy([[1088, 412], [1070, 430], [1056, 490], [1046, 560], [1052, 600]]) + "L1043 585 1028 585" +
    hairy([[1028, 585], [1000, 635], [975, 685], [945, 730], [918, 755]]) + "L930 758 865 775 847 798",
  "M966 828L978 833 992 790" + hairy([[992, 790], [1020, 755], [1060, 680], [1110, 600]]) + "L1098 570 1118 590" + hairy([[1118, 590], [1165, 480], [1190, 420]]) +
    "L1192 390 1213 430 1228 408 1256 412 1260 395 1280 395 1329 383 1280 397 1262 420" + hairy([[1262, 420], [1238, 460], [1226, 505], [1232, 540], [1228, 580], [1236, 630]]) +
    "L1244 652 1240 632 1228 640" + hairy([[1228, 640], [1210, 710], [1188, 780], [1180, 825]]) + "L1166 812 1168 850 1188 851 1168 853" + hairy([[1168, 853], [1168, 890], [1178, 930]], 12, 3) +
    "L1184 965 1222 991 1206 970 1203 940 1215 900 1240 868 1238 825 1205 823 1236 820 1248 845" + hairy([[1248, 845], [1256, 790], [1272, 720], [1289, 630]], 14, 5) +
    "L1275 614 1298 610 1304 590" + hairy([[1304, 590], [1312, 540], [1325, 490], [1330, 460]], 14, 5) + "L1326 443 1336 450 1352 470 1410 460",
];
const BACK =
  "M147 175L205 179 229 172 248 156 274 101 290 131 296 168 290 210 278 268 280 337 266 303 253 299 240 303 176 353 150 435 136 478 127 469 111 486 141 503 148 498 152 475 176 395 181 360 240 319 258 310 271 347 278 347 283 371 302 364 309 350 321 343 308 390 295 437 294 457 305 474 339 483 321 513 309 586 317 596 528 630 735 650 949 656 785 668 618 669 459 657 298 634 277 667 265 709 243 759 233 757 227 765 231 776 243 776 306 799 376 801 424 837 463 886 426 908 396 940 376 985 366 1038 368 1083 372 1089 377 1080 390 1000 408 954 440 918 474 895 541 899 543 905 527 914 531 922 504 955 492 1000 491 1080 495 1087 499 1080 502 988 518 945 541 915 555 906 628 886 670 878 709 891 666 943 640 995 623 1037 629 1041 636 1030 648 998 687 940 738 898 754 898 797 926 838 939 794 985 760 1043 766 1050 778 1035 806 988 857 940 920 964 990 976 945 1007 909 1046";
const NECK =
  "M0 644L50 653 92 668 120 688 149 720 125 731 106 755 100 780 64 932 90 865 113 775 137 748 185 729 107 668 108 658 123 643 155 656 195 655 225 629 221 620 192 641 155 640 123 632 108 615 112 595 92 582 65 578 48 580L45 571 30 573 28 564 15 568 12 558 0 556";
const TAIL =
  "M881 56L852 105 835 163 830 225 844 284 852 284 845 222 848 166 863 115 890 68 925 30 965 1 979 -9 1020 9 1056 38 1028 41 1007 70 995 132 1000 134 1007 100 1018 78 1036 55 1070 45 1105 47 1137 65 1186 119 1155 135 1158 141 1187 134 1250 144 1327 121 1377 125 1424 149 1459 187 1481 235 1484 290 1459 323 1431 341 1370 350 1383 330 1380 318 1352 258 1325 214 1300 196 1300 203 1335 248 1358 286 1370 323 1358 349 1290 347 1222 328 1150 281 1150 287 1172 314 1200 333 1248 350 1308 357 1309 364 1302 378 1306 396 1295 407 1299 432 1260 452 1260 459 1281 453 1190 488 1160 476 1142 450 1121 402 1115 404 1130 440 1147 487 1146 507 1118 569 1078 616 1050 634 1020 639 992 637 971 619 959 585 960 519 979 457 1010 402 1035 381 1053 374 1057 363 1110 347 1121 354 1118 336 1100 345 1063 347 1085 300 1102 279 1106 255 1105 221 1098 229 1071 284 1044 367 992 379 986 372 972 312 974 275 985 238 980 236 965 283 965 310 977 390 940 392 908 383 876 366 862 347 857 352 868 406 889 443 853 451 815 443 780 422 735 361 723 325 725 292 735 259 721 229 714 233 709 340 718 393 741 437 707 449 670 441 638 417 603 365 565 299 547 288 535 269 530 273 533 330 546 390 569 447 518 440 469 414 429 376 398 325 381 266 415 262 446 243 445 240 380 254 345 227 364 285 330 295 296 320 280 320 210 288 206 291 248 314 253 345 811 872 650 750 237 381 214 398 186 404 178 360 157 320 154 326 170 355 177 375 178 400 171 402 171 450 163 502 149 520 153 526 167 514 177 520 230 598 277 697 277 722 270 739 285 719 300 731 305 760 314 770 330 799 331 818 340 835 314 822 290 797 273 763 284 745 274 768 255 740 248 738 230 703 225 708 212 680 208 685 199 660 195 662 183 630 179 636 167 598 166 612 152 575 140 540 118 490 133 505 130 487 118 475 110 455 113 415 110 362 124 317 122 340 103 375 100 340 111 303 141 263 137 262 102 291 78 258 35 238 40 243 72 261 90 285 95 305 91 328 85 332 45 335 50 320 42 309 43 330 34 341 0 343";

const MARKS = [
  [658, 546], [715, 556], [797, 582], [807, 593], [831, 599], [955, 503], [966, 500], [956, 483], [1005, 470], [1031, 480], [988, 569],
  [796, 652], [1045, 671], [1065, 666], [1007, 620], [1008, 625], [1014, 881], [1161, 712], [1321, 691], [1380, 685],
];

const Lobster = () => (
  <Drawing viewBox="447 228 1473 765" preserveAspectRatio="xMinYMin meet" role="img" aria-label="lobster_Graphic_Design_copy">
    <g transform="translate(620 290) scale(.33333)">{UPPER.map((d) => <path key={d} d={d} />)}</g>
    <g transform="translate(620 580) scale(.33333)">{LOWER.map((d) => <path key={d} d={d} />)}</g>
    <g transform="translate(1080 290) scale(.40816 .33333)"><path d={BACK} /><path d={NECK} /></g>
    <g transform="translate(1080 620) scale(.42091 .33333)"><path d={TAIL} /></g>
    {MARKS.map(([x, y]) => <path className="mark" key={`${x},${y}`} d={`M${x - 4} ${y + 0.5}h9M${x + 0.5} ${y - 4}v9`} />)}
  </Drawing>
);

const ImePill = styled.div`
  position: absolute;
  right: 26px;
  bottom: 19px;
  display: flex;
  align-items: center;
  height: 45px;
  padding: 0 17px 0 5px;
  border-radius: 23px;
  background: #222;
  color: #e6e6e6;
  font-size: 22px;
  font-weight: 500;
  line-height: 45px;
  gap: 10px;
`;
const ImeRing = styled.i`
  width: 35px;
  height: 35px;
  border-radius: 50%;
  border: 7px solid #4d7b7b;
  background: #1c1c1c;
  box-shadow: inset 0 0 0 3px #8ef2f0;
`;
const Meter = styled.div`
  position: absolute;
  right: 0;
  top: 386px;
  display: flex;
  flex-direction: column;
  align-items: flex-end;
  gap: 1px;
  width: 15px;
  height: 88px;
  padding: 10px 2px 0 0;
  background: #4a5164;
  border: 1px solid #363c4c;
  border-right: 0;
  border-radius: 4px 0 0 4px;
`;
const Tick = styled.i<{ $c: string }>`
  width: 6px;
  height: 2px;
  background: ${(p) => p.$c};
`;

/* ---------- menus ---------- */

const MenuBox = styled.div<{ $x: number; $y: number; $w: number }>`
  position: absolute;
  left: ${(p) => p.$x}px;
  top: ${(p) => p.$y}px;
  width: ${(p) => p.$w}px;
  padding: 3px 3px 1px;
  background: #fff;
  border: 1px solid #a0a0a0;
  box-shadow: 3px 3px 3px rgba(0, 0, 0, 0.5);
`;
const Item = styled.button<{ $on?: boolean; $pad: number; $off?: boolean }>`
  display: flex;
  align-items: center;
  width: 100%;
  height: 25px;
  margin-bottom: 2px;
  white-space: nowrap;
  text-align: left;
  background: ${(p) => (p.$on ? "#afd6e0" : "transparent")};
  color: ${(p) => (p.$off ? "#a0a0a0" : "inherit")};
  > span:first-child { display: grid; padding-left: 5px; width: ${(p) => p.$pad}px; flex: none; }
  > span:nth-child(2) { flex: 1; }
  > kbd { font: inherit; margin-right: 24px; }
  > svg { margin-right: 3px; }
`;
const Rule = styled.hr`
  height: 1px;
  margin: 4px 9px 6px;
  border: 0;
  background: #d4d4d4;
`;
const FormatTag = styled.span`
  display: flex;
  flex-direction: column;
  font: 700 7px/8px "Open Sans", sans-serif;
  color: #1c1470;
  svg { align-self: flex-start; margin-left: 11px; }
`;
const Tip = styled.div`
  position: absolute;
  left: 630px;
  top: 846px;
  width: 312px;
  padding: 9px 8px 8px;
  background: #fff;
  border: 1px solid #a0a0a0;
  box-shadow: 3px 3px 3px rgba(0, 0, 0, 0.45);
  font-size: 19px;
  line-height: 25px;
  white-space: nowrap;
`;

type Entry = { t: string; i?: string; k?: string; sub?: boolean; on?: boolean; off?: boolean; tag?: string } | null;

const Menu = ({ x, y, w, pad, items }: { x: number; y: number; w: number; pad: number; items: Entry[] }) => (
  <MenuBox $x={x} $y={y} $w={w} role="menu">
    {items.map((e, n) =>
      e ? (
        <Item key={e.t} role="menuitem" $pad={pad} $on={e.on} $off={e.off}>
          <span>
            {e.i && <Icon n={e.i} />}
            {e.tag && <FormatTag>{e.tag}<Caret right c="#b0149c" /></FormatTag>}
          </span>
          <span><Key t={e.t} /></span>
          {e.k && <kbd>{e.k}</kbd>}
          {e.sub && <Caret right />}
        </Item>
      ) : <Rule key={n} />
    )}
  </MenuBox>
);

const MAIN: Entry[] = ["文件(&F)", "编辑(&E)", "视图(&V)", "插入(&S)", "格式(&R)", "工具(&T)", "装配(&A)", "信息(&I)", "分析(&L)", "首选项(&P)", "窗口(&O)", "帮助(&H)"]
  .map((t, i) => ({ t, sub: true, on: i === 0 }));

const FILE: Entry[] = [
  { t: "新建(&N)...", i: "newf", k: "Ctrl+N" }, { t: "打开(&O)...", i: "open", k: "Ctrl+O" }, { t: "关闭(&C)", sub: true }, null,
  { t: "保存(&S)", i: "save", k: "Ctrl+S" }, { t: "仅保存工作部件(&W)", i: "savework" }, { t: "另存为(&A)...", i: "saveas", k: "Ctrl+Shift+A" },
  { t: "全部保存(&V)", i: "saveall" }, { t: "保存书签(&B)..." }, null,
  { t: "选项(&T)", sub: true }, null,
  { t: "打印(&P)...", i: "print" }, { t: "&3D 打印...", i: "print" }, { t: "绘图(&L)...", k: "Ctrl+P" }, { t: "导入(&M)", sub: true },
  { t: "导出(&E)", sub: true, on: true }, { t: "互操作(&R)..." }, null,
  { t: "实用工具(&U)", sub: true }, { t: "执行(&T)", sub: true }, { t: "属性(&I)" }, null,
  { t: "最近打开的部件(&Y)", sub: true }, null,
  { t: "完成草图(&K)", i: "flag", k: "Ctrl+Q", off: true }, { t: "退出(&X)", i: "exit" },
];

const EXPORT: Entry[] = [
  { t: "部件(&P)..." }, { t: "Pa&rasolid..." }, { t: "用户定义特征(&U)..." }, null,
  { t: "P&DF..." }, { t: "&CGM..." }, { t: "ST&L..." }, { t: "多边形文件(&O)..." }, null,
  { t: "编创 &HTML..." }, { t: "J&T..." }, null,
  { t: "&VRML...", tag: "VRML" }, { t: "P&NG...", tag: "PNG" }, { t: "&JPEG...", tag: "JPEG" }, { t: "&GIF...", tag: "GIF" }, { t: "TI&FF...", tag: "TIFF" }, { t: "&BMP...", tag: "BMP" }, null,
  { t: "&IGES..." }, { t: "ST&EP..." }, { t: "AutoCAD DXF/D&WG...", on: true }, null,
  { t: "&2D Exchange..." }, { t: "修复几何体(&Y)..." }, { t: "CATIA V&4..." }, { t: "CATIA V&5..." }, { t: "&ACIS..." },
];

/* ---------- bottom ---------- */

const Status = styled.footer`
  display: flex;
  align-items: center;
  justify-content: flex-end;
  gap: 4px;
  height: 26px;
  flex: none;
  padding: 0 55px 2px 0;
`;
const TaskBar = styled.footer`
  display: flex;
  height: 60px;
  flex: none;
  background: #1e1e1e;
  color: #fff;
`;
const StartButtons = styled.div`
  display: flex;
  margin-right: 4px;
`;
const StartButton = styled.button`
  display: grid;
  place-items: center;
  width: 72px;
`;
const Task = styled.button<{ $line?: boolean; $on?: boolean }>`
  display: grid;
  place-items: center;
  width: 73px;
  margin-right: 2px;
  ${(p) => p.$line && css`background: linear-gradient(#76b9ed, #76b9ed) center bottom / 61px 3px no-repeat;`}
  ${(p) => p.$on && css`background: linear-gradient(#76b9ed, #76b9ed) center bottom / 100% 3px no-repeat #4b4b4b;`}
`;
const Tray = styled.div`
  display: flex;
  align-items: center;
  margin-left: auto;
  gap: 18px;
  padding-right: 6px;
  font-size: 21px;
  font-weight: 500;
`;
const TrayIcons = styled.div`
  display: flex;
  align-items: center;
  gap: 12px;
`;
const Clock = styled.time`
  display: grid;
  width: 104px;
  font-size: 17px;
  font-weight: 400;
  line-height: 28px;
  text-align: center;
`;
const Show = styled.i`
  width: 2px;
  height: 60px;
  margin-left: 12px;
  background: #6e6e6e;
`;
const Watermark = styled.div`
  position: absolute;
  right: 16px;
  bottom: 6px;
  font: 19px/28px "Liberation Sans", "Noto Sans CJK SC", sans-serif;
  color: rgba(255, 255, 255, 0.5);
  white-space: nowrap;
`;

const App = () => (
  <Shell>
    <Global />
    <TitleBar>
      <Quick>
        <NxMark>NX</NxMark>
        <QuickSet><button aria-label="保存"><Icon n="save" /></button></QuickSet>
        <QuickSet>
          <button aria-label="撤消"><Icon n="undo" /></button><button aria-label="撤消列表"><Caret /></button><button aria-label="重做"><Icon n="redo" /></button>
        </QuickSet>
        <QuickSet>
          <button aria-label="剪切"><Icon n="cut" /></button><button aria-label="复制"><Icon n="copy" /></button><button aria-label="粘贴"><Icon n="paste" /></button>
        </QuickSet>
        <QuickSet><button aria-label="重复命令"><Icon n="gear" /></button><button aria-label="命令列表"><Caret /></button></QuickSet>
        <QuickSet><button aria-label="触控模式"><Icon n="touch" s={16} /></button></QuickSet>
        <QuickSet>
          <PlainButton><Icon n="switchw" />切换窗口</PlainButton>
          <PlainButton><Icon n="window" />窗口<Caret /></PlainButton>
          <button aria-label="工具条选项"><Caret bar /></button>
        </QuickSet>
      </Quick>
      <Title>NX 11 - 外观造型设计 - [lobster_Graphic_Design_copy.prt]</Title>
      <TitleRight>
        <Brand>SIEMENS</Brand>
        <button aria-label="最小化"><Icon n="min" /></button>
        <button aria-label="还原"><Icon n="restoret" /></button>
        <button aria-label="关闭"><Icon n="close" /></button>
      </TitleRight>
    </TitleBar>

    <TabBar>
      <Tab $kind="file">文件(F)</Tab>
      <Tab $kind="active">主页</Tab>
      {["装配", "曲线", "特征", "分析", "视图", "渲染", "工具", "应用模块"].map((t) => <Tab key={t}>{t}</Tab>)}
      <TabRight>
        <SearchBox><input aria-label="查找命令" placeholder="查找命令" /><Icon n="search" s={16} /></SearchBox>
        <button aria-label="全屏"><Icon n="full" /></button>
        <button aria-label="折叠功能区"><Icon n="up2" s={14} /></button>
        <button aria-label="帮助"><Icon n="help" s={14} /></button>
        <WinButtons>
          <button aria-label="最小化"><Icon n="min" /></button>
          <button aria-label="还原"><Icon n="restore" /></button>
          <button aria-label="关闭"><Icon n="closeb" /></button>
        </WinButtons>
      </TabRight>
    </TabBar>

    <RibbonBar>
      <Group t="创建">
        <Big n="plane" t="基准平面" arrow />
        <Icons n={["line", "arc", "curves"]} />
        <Big n="spline" t="艺术样条" />
        <GalleryBlock n={["project", "offsetc"]} />
        <Big n="nxrealize" t="NX 创意塑型" />
        <Big n="fourpt" t="四点曲面" arrow />
        <List items={[["studio", "艺术曲面"], ["sweep", "样式扫掠"], ["law", "规律延伸"]]} />
        <GalleryBlock n={["blendface", "flange"]} />
      </Group>
      <Group t="操作">
        <Big n="offsurf" t="偏置曲面" arrow />
        <Big n="divide" t="剪断曲面" />
        <List two items={[["trim", "修剪片体"], ["untrim", "取消修剪"]]} />
        <GalleryBlock cols={2} n={["cubeoff", "pipe", "extend", "pull"]} />
        <List items={[["sew", "缝合"], ["patch", "修补"], ["thicken", "加厚"]]} />
      </Group>
      <Group t="编辑">
        <Big n="xform" t="X 型" arrow />
        <List items={[["matchedge", "匹配边"], ["symm", "边对称"], ["enlarge", "扩大"]]} />
        <Big n="trimcurve" t="修剪曲线" />
        <Big n="curvelen" t="曲线长度" />
      </Group>
      <Group t="分析">
        <Big n="section" t="截面分析" />
        <Icons n={["ana1", "ana2", "ana3"]} />
        <List items={[["comb", "显示曲率梳"], ["highlight", "高亮线"], ["reflect", "反射"]]} />
        <Icons n={["cup", "heat", "rainbow"]} />
        <Big n="deviate" t="偏差度量" />
        <Big n="continuity" t="曲面连续性" arrow />
        <Icons n={["info1", "info2", "info3"]} />
      </Group>
      <GroupBox>
        <MoreButton><MoreTile><Icon n="brain" /></MoreTile>更多<Caret /></MoreButton>
      </GroupBox>
      <RibbonEnd><button aria-label="功能区选项"><Caret /></button></RibbonEnd>
    </RibbonBar>

    <ToolBar>
      <MenuButton><Icon n="menu" /><span><Key t="菜单(&M)" /></span><Caret /></MenuButton>
      <Divider />
      <Pick w={187} v="无选择过滤器" label="选择过滤器" />
      <Pick w={197} v="整个装配" label="选择范围" />
      <Tools n={["t_asm", "t_filter", "t_snap", "v", "t_target", "t_rot", "t_tgray", "t_rect", "v"]} />
      <Pick w={157} v="内侧" label="选择方式" />
      <Tools n={["t_face", "+t_cube", "+t_line1", "+t_line2", "t_scurve", "+t_zig", "+t_wave", "t_cross", "+t_circle", "t_quad", "+t_plus", "+t_slash", "t_sheet"]} />
      <Divider />
      <Tools n={["v_zoom", "v_pan", "v_rot", "v_fit", "v", "v_orient", "v", "v_ball", "v", "v_sect", "v"]} />
      <Divider />
      <CaretButton $end aria-label="工具条选项"><Caret /></CaretButton>
    </ToolBar>

    <Work>
      <Rail>
        <RailTab aria-label="部件导航器" />
        {["clock", "wand", "tools", "roles", "hist"].map((k) => <button key={k} aria-label={k}><Icon n={k} s={24} /></button>)}
      </Rail>
      <Panel>
        <PanelHead><button aria-label="最大化"><Icon n="max" /></button></PanelHead>
        <GridClip>
          <Grid>
            <colgroup><col /><col /><col /></colgroup>
            <thead><tr><th /><th /><th /></tr></thead>
            <tbody>{Array.from({ length: 24 }, (_, i) => <tr key={i}><td /><td /><td /></tr>)}</tbody>
          </Grid>
        </GridClip>
        <HScroll>
          <button aria-label="向左滚动"><svg width="8" height="12" viewBox="0 0 8 12"><path d="M7 1 2 6l5 5" fill="none" stroke="#333" strokeWidth="1.800" /></svg></button>
        </HScroll>
        <Splitter />
      </Panel>
      <Viewport>
        <Lobster />
        <Meter>
          {Array.from({ length: 23 }, (_, i) => (
            <Tick key={i} $c={i < 12 ? "#2f3545" : i < 15 ? "#a8c860" : i < 19 ? "#78c880" : "#4cc0b0"} />
          ))}
        </Meter>
        <ImePill><ImeRing /><span>中</span><span>°，</span><span>半</span><Icon n="shirt" /></ImePill>
      </Viewport>
    </Work>

    <Status><Icon n="finish" /><Icon n="full" /></Status>

    <TaskBar>
      <StartButtons>
        <StartButton aria-label="开始"><Icon n="win" /></StartButton>
        <StartButton aria-label="搜索"><Icon n="find" /></StartButton>
      </StartButtons>
      <Task $line aria-label="Chrome"><Icon n="chrome" /></Task>
      <Task aria-label="Edge"><Icon n="edge" /></Task>
      <Task aria-label="Python"><Icon n="py" /></Task>
      <Task aria-label="资源管理器"><Icon n="folder" /></Task>
      <Task aria-label="PCL"><Icon n="pcl" /></Task>
      <Task $on aria-label="NX"><Icon n="nx" /></Task>
      <Task $line aria-label="手机"><Icon n="phone" /></Task>
      <Tray>
        <TrayIcons><Icon n="chev" /><Icon n="qq" /><Icon n="batt" /></TrayIcons>
        <Icon n="pen" /><span>中</span><Icon n="sogou" />
        <Clock><span>2:49 PM</span><span>8/24/2022</span></Clock>
        <Icon n="note" />
        <Show />
      </Tray>
    </TaskBar>

    <Menu x={7} y={223} w={137} pad={31} items={MAIN} />
    <Menu x={141} y={226} w={264} pad={31} items={FILE} />
    <Menu x={402} y={348} w={231} pad={31} items={EXPORT} />
    <Tip>将部件或选定的几何体以 2D 或 3D<br />形式导出为 AutoCAD DXF 或 DWG<br />文件。</Tip>
    <Watermark>CSDN @程序菜鸟一只</Watermark>
  </Shell>
);

export default App;
